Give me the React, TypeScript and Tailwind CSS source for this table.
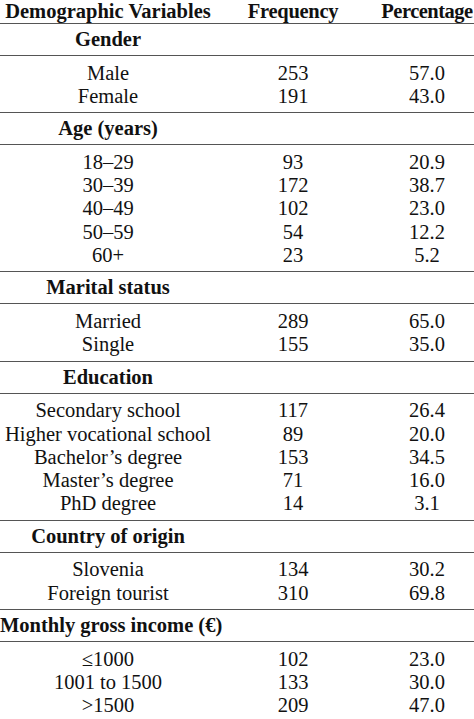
const sections = [
  {
    title: "Gender",
    rows: [
      ["Male", "253", "57.0"],
      ["Female", "191", "43.0"],
    ],
  },
  {
    title: "Age (years)",
    rows: [
      ["18–29", "93", "20.9"],
      ["30–39", "172", "38.7"],
      ["40–49", "102", "23.0"],
      ["50–59", "54", "12.2"],
      ["60+", "23", "5.2"],
    ],
  },
  {
    title: "Marital status",
    rows: [
      ["Married", "289", "65.0"],
      ["Single", "155", "35.0"],
    ],
  },
  {
    title: "Education",
    rows: [
      ["Secondary school", "117", "26.4"],
      ["Higher vocational school", "89", "20.0"],
      ["Bachelor’s degree", "153", "34.5"],
      ["Master’s degree", "71", "16.0"],
      ["PhD degree", "14", "3.1"],
    ],
  },
  {
    title: "Country of origin",
    rows: [
      ["Slovenia", "134", "30.2"],
      ["Foreign tourist", "310", "69.8"],
    ],
  },
  {
    title: "Monthly gross income (€)",
    rows: [
      ["≤1000", "102", "23.0"],
      ["1001 to 1500", "133", "30.0"],
      [">1500", "209", "47.0"],
    ],
  },
];

const cols = "grid grid-cols-[216px_154px_114px] text-center whitespace-nowrap";

export default function App() {
  return (
    <div className="w-[474px] h-[719px] overflow-hidden bg-white text-[#111] font-['Liberation_Serif','Times_New_Roman',serif] text-[20.5px] leading-[23.2px]">
      <div className="w-[484px]">
        <div className={`${cols} h-[24px] items-end pb-[5px] font-bold border-b border-[#555]`}>
          <div>Demographic Variables</div>
          <div className="tracking-[-0.3px]">Frequency</div>
          <div className="tracking-[-0.5px]">Percentage</div>
        </div>

        {sections.map((s) => (
          <div key={s.title}>
            <div className={`${cols} h-[32px] items-center font-bold border-b border-[#555]`}>
              <div>{s.title}</div>
              <div />
              <div />
            </div>
            <div className="pt-[5.5px] pb-[4.5px] border-b border-[#555]">
              {s.rows.map(([label, freq, pct]) => (
                <div key={label} className={cols}>
                  <div>{label}</div>
                  <div>{freq}</div>
                  <div>{pct}</div>
                </div>
              ))}
            </div>
          </div>
        ))}
      </div>
    </div>
  );
}
